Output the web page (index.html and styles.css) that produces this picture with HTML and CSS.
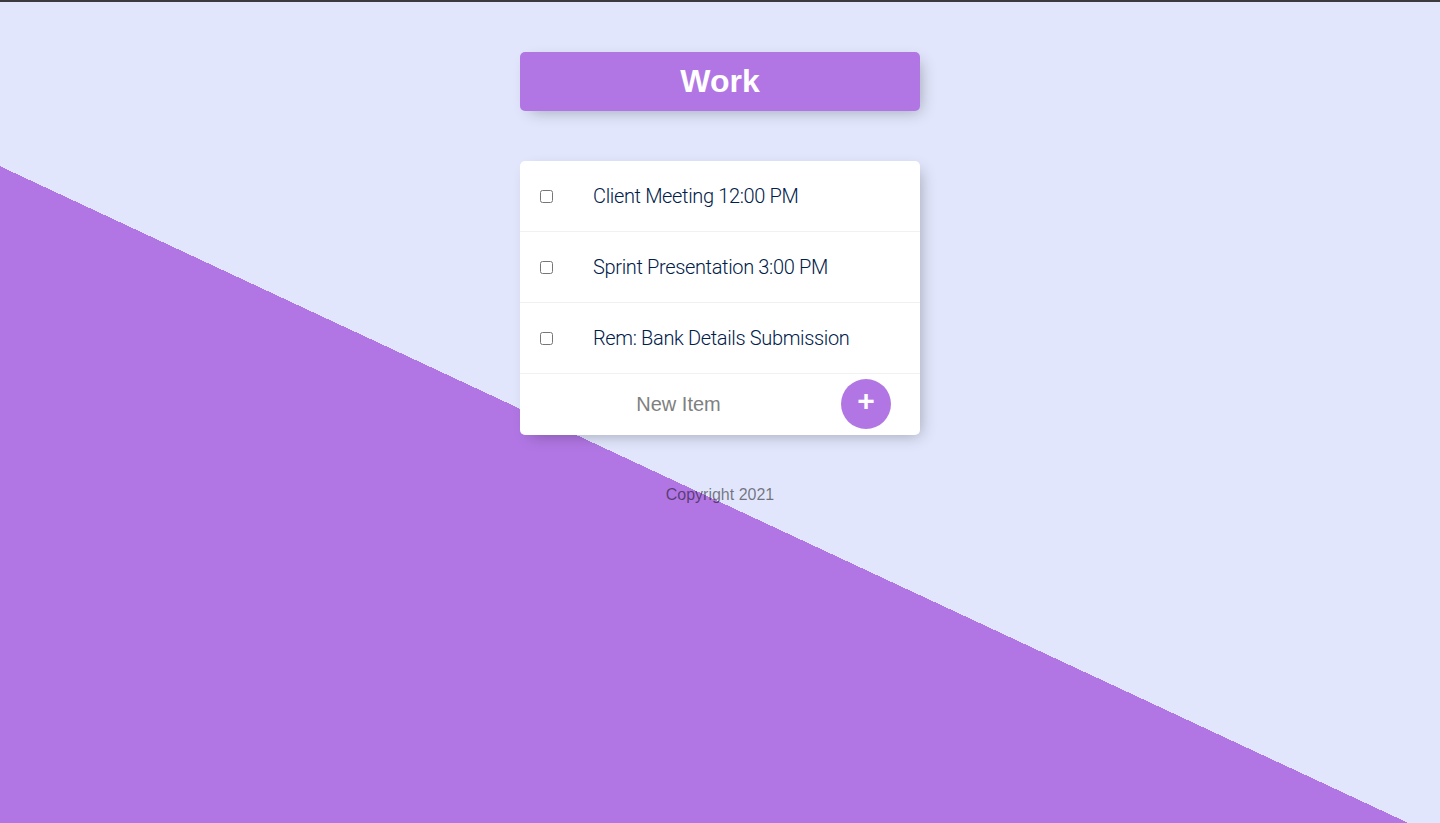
FILE: index.html
```html
<!DOCTYPE html>
<html lang="en">
<head>
<meta charset="utf-8">
<title>To Do List</title>
<link rel="stylesheet" href="styles.css">
</head>
<body>
  <div class="card heading">
    <h1>Work</h1>
  </div>

  <div class="card list">
    <div class="item">
      <input type="checkbox" class="check">
      <p class="item-text">Client Meeting 12:00 PM</p>
    </div>
    <div class="item">
      <input type="checkbox" class="check">
      <p class="item-text">Sprint Presentation 3:00 PM</p>
    </div>
    <div class="item">
      <input type="checkbox" class="check">
      <p class="item-text">Rem: Bank Details Submission</p>
    </div>
    <form class="item new-item">
      <input type="text" class="new-input" placeholder="New Item" autocomplete="off">
      <button type="button" class="add-btn">+</button>
    </form>
  </div>

  <footer class="footer">Copyright 2021</footer>
</body>
</html>
```

FILE: styles.css
```css
* {
  box-sizing: border-box;
}

html {
  height: 100%;
  border-top: 2px solid #3b3b3d;
  background-color: #E1E6FC;
  background-image: linear-gradient(25deg, #B176E4 50%, #E1E6FC 50%);
  background-size: 100% 1000px;
  background-repeat: no-repeat;
  font-family: "Liberation Sans", Arial, sans-serif;
  overflow: hidden;
}

body {
  margin: 0;
  padding: 50px 8px 0;
}

.card {
  width: 400px;
  margin: 0 auto 50px;
  background: #ffffff;
  border-radius: 5px;
  box-shadow: 5px 5px 15px -5px rgba(0, 0, 0, 0.3);
}

.heading {
  background-color: #B176E4;
  text-align: center;
}

.heading h1 {
  margin: 0;
  padding: 10px;
  color: #ffffff;
  font-size: 32px;
  font-weight: 700;
  line-height: 38.67px;
}

.item {
  min-height: 71px;
  display: flex;
  align-items: center;
  border-bottom: 1px solid #F1F1F1;
}

.item:last-child {
  border-bottom: 0;
}

.check {
  width: 13px;
  height: 13px;
  margin: 1px 20px 0;
  flex: none;
}

.item-text {
  margin: 0;
  padding: 20px;
  font-family: Roboto, "Liberation Sans", sans-serif;
  font-size: 20px;
  font-weight: 300;
  letter-spacing: -0.35px;
  color: #00204a;
}

.new-item {
  min-height: 61px;
  height: 61px;
  margin: 0;
  padding-right: 29px;
}

.new-input {
  width: 317px;
  height: 60px;
  margin: 0;
  padding: 0;
  border: none;
  background: transparent;
  text-align: center;
  font-family: "Liberation Sans", Arial, sans-serif;
  font-size: 20px;
  outline: none;
}

.new-input::placeholder {
  color: #808080;
  opacity: 1;
}

.add-btn {
  width: 50px;
  height: 50px;
  margin-left: auto;
  padding: 0 0 6px;
  border: 0;
  border-radius: 50%;
  background-color: #B176E4;
  color: #ffffff;
  font-family: "Liberation Sans", Arial, sans-serif;
  font-size: 30px;
  line-height: 44px;
  font-weight: 700;
}

.footer {
  text-align: center;
  color: rgba(0, 0, 0, 0.5);
  font-size: 16px;
  line-height: 20px;
}
```
